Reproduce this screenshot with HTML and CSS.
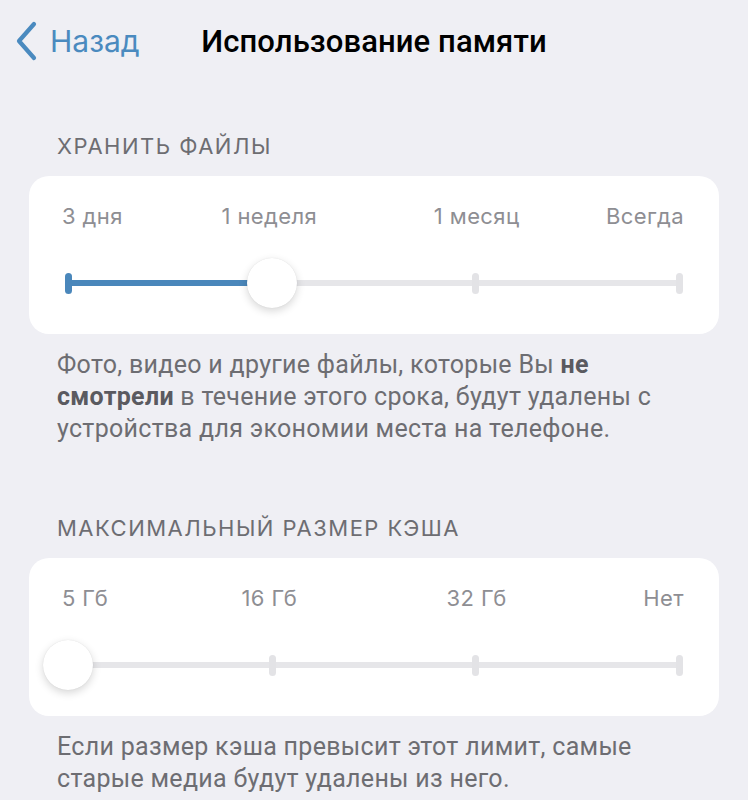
FILE: index.html
```html
<!DOCTYPE html>
<html lang="ru">
<head>
  <meta charset="UTF-8">
  <meta name="viewport" content="width=device-width, initial-scale=1.0">
  <title>Использование памяти</title>
  <link rel="stylesheet" href="styles.css">
</head>
<body>

<div class="navbar">
  <a class="back" href="#">
    <svg class="chevron" width="24" height="40" viewBox="0 0 24 40">
      <path d="M20 3 L5 20 L20 37" fill="none" stroke="#4a8abf" stroke-width="4.2" stroke-linecap="round" stroke-linejoin="round"/>
    </svg>
    <span>Назад</span>
  </a>
  <h1>Использование памяти</h1>
  <div></div>
</div>

<div class="section">
  <div class="section-title">ХРАНИТЬ ФАЙЛЫ</div>
  <div class="card">
    <div class="labels">
      <div class="lbl first"><span>3 дня</span></div>
      <div class="lbl"><span>1 неделя</span></div>
      <div class="lbl"><span>1 месяц</span></div>
      <div class="lbl last"><span>Всегда</span></div>
    </div>
    <div class="slider">
      <div class="track">
        <div class="fill" style="width: 33.333%"></div>
        <i class="tick on"></i><i class="tick"></i><i class="tick"></i><i class="tick"></i>
      </div>
      <div class="thumb" style="left: 33.333%"></div>
    </div>
  </div>
  <p class="section-footer">Фото, видео и другие файлы, которые Вы <b>не</b> <b>смотрели</b> в течение этого срока, будут удалены с устройства для экономии места на телефоне.</p>
</div>

<div class="section">
  <div class="section-title">МАКСИМАЛЬНЫЙ РАЗМЕР КЭША</div>
  <div class="card">
    <div class="labels">
      <div class="lbl first"><span>5 Гб</span></div>
      <div class="lbl"><span>16 Гб</span></div>
      <div class="lbl"><span>32 Гб</span></div>
      <div class="lbl last"><span>Нет</span></div>
    </div>
    <div class="slider">
      <div class="track">
        <i class="tick"></i><i class="tick"></i><i class="tick"></i><i class="tick"></i>
      </div>
      <div class="thumb" style="left: 0%"></div>
    </div>
  </div>
  <p class="section-footer">Если размер кэша превысит этот лимит, самые старые медиа будут удалены из него.</p>
</div>

</body>
</html>
```

FILE: styles.css
```css
body { margin: 0; background: #efeff4; font-family: Inter, "Noto Sans", sans-serif; color: #000; }

.navbar { display: grid; grid-template-columns: 1fr auto 1fr; align-items: center; height: 82px; padding: 0 14px; }
.back { display: flex; align-items: center; gap: 12px; color: #4a8abf; text-decoration: none; font-size: 30px; }
.chevron { display: block; }
.navbar h1 { margin: 0; font-family: Roboto, sans-serif; font-weight: 500; font-size: 31px; letter-spacing: 0.1px; }

.section { padding-top: 50px; }
.section + .section { padding-top: 69px; }
.section-title { padding: 0 57px; font-size: 22px; line-height: 28px; color: #6d6d72; letter-spacing: 1.5px; margin-bottom: 16px; }

.card { margin: 0 29px; background: #fff; border-radius: 20px; padding: 26px 0 25px; }

.labels { display: flex; justify-content: space-between; margin: 0 39px; font-size: 22px; line-height: 28px; color: #8e8e93; letter-spacing: 0.4px; }
.lbl { width: 0; display: flex; justify-content: center; white-space: nowrap; }
.lbl.first { justify-content: flex-start; margin-left: -6px; }
.lbl.last { justify-content: flex-end; margin-right: -4px; }

.slider { position: relative; margin: 27px 39px 0; height: 52px; display: flex; align-items: center; }
.track { position: relative; flex: 1; display: flex; justify-content: space-between; align-items: center; height: 22px; margin: 0 -3px; background: linear-gradient(#e6e6e9, #e6e6e9) center / 100% 6px no-repeat; }
.fill { position: absolute; left: 3px; top: 8px; height: 6px; background: #4a87bb; }
.tick { display: block; width: 7px; height: 21px; border-radius: 3.5px; background: #e3e3e6; position: relative; }
.tick.on { background: #4a87bb; }
.thumb { position: absolute; top: 50%; width: 50px; height: 50px; border-radius: 50%; background: #fff; transform: translate(-50%, -50%); box-shadow: 0 3px 8px rgba(0, 0, 0, 0.16), 0 0 1px rgba(0, 0, 0, 0.12); }

.section-footer { margin: 15px 0 0; padding: 0 60px 0 57px; font-family: Roboto, sans-serif; font-size: 25px; line-height: 32px; letter-spacing: 0.3px; color: #6d6d72; }
.section-footer b { font-weight: 700; color: #5a5a60; }
```
